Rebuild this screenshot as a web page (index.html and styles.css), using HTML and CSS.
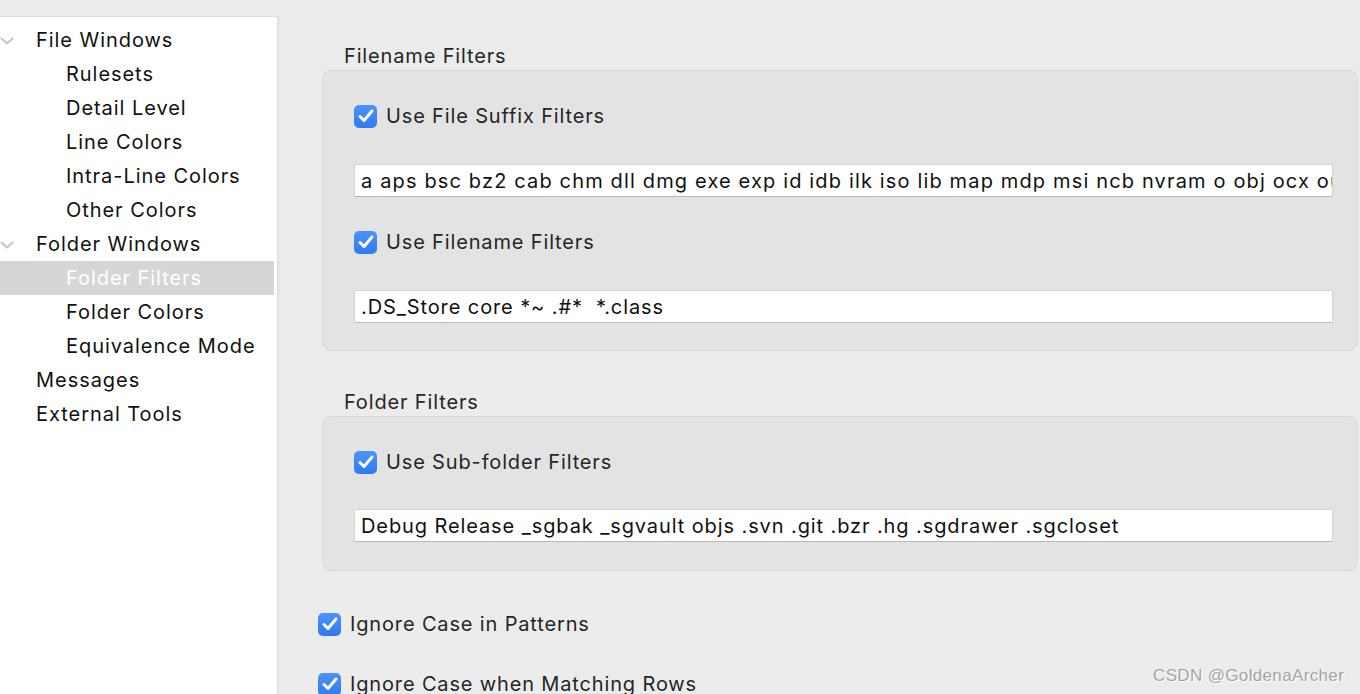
FILE: index.html
```html
<!DOCTYPE html>
<html>
<head>
<meta charset="utf-8">
<link rel="stylesheet" href="styles.css">
</head>
<body>
<div class="window">
  <aside class="sidebar">
    <ul class="tree">
      <li class="row top"><span class="chev"><svg width="14" height="10" viewBox="0 0 14 10"><path d="M1.5 2.5 L7 7.5 L12.5 2.5" fill="none" stroke="#c4c4c4" stroke-width="2" stroke-linecap="round" stroke-linejoin="round"/></svg></span>File Windows</li>
      <li class="row sub">Rulesets</li>
      <li class="row sub">Detail Level</li>
      <li class="row sub">Line Colors</li>
      <li class="row sub">Intra-Line Colors</li>
      <li class="row sub">Other Colors</li>
      <li class="row top"><span class="chev"><svg width="14" height="10" viewBox="0 0 14 10"><path d="M1.5 2.5 L7 7.5 L12.5 2.5" fill="none" stroke="#c4c4c4" stroke-width="2" stroke-linecap="round" stroke-linejoin="round"/></svg></span>Folder Windows</li>
      <li class="row sub selected">Folder Filters</li>
      <li class="row sub">Folder Colors</li>
      <li class="row sub">Equivalence Mode</li>
      <li class="row top">Messages</li>
      <li class="row top">External Tools</li>
    </ul>
  </aside>
  <main class="content">
    <section class="group">
      <h2 class="group-title">Filename Filters</h2>
      <div class="box">
        <label class="check"><span class="cb"><svg width="18" height="16" viewBox="0 0 18 16"><path d="M3 8.5 L7 12.5 L15 3" fill="none" stroke="#fff" stroke-width="3" stroke-linecap="round" stroke-linejoin="round"/></svg></span>Use File Suffix Filters</label>
        <div class="field wide">a aps bsc bz2 cab chm dll dmg exe exp id idb ilk iso lib map mdp msi ncb nvram o obj ocx out pch pdb pyc res sbr sdf so suo tlb vcxproj.user vsp</div>
        <label class="check"><span class="cb"><svg width="18" height="16" viewBox="0 0 18 16"><path d="M3 8.5 L7 12.5 L15 3" fill="none" stroke="#fff" stroke-width="3" stroke-linecap="round" stroke-linejoin="round"/></svg></span>Use Filename Filters</label>
        <div class="field">.DS_Store core *~ .#*&nbsp; *.class</div>
      </div>
    </section>
    <section class="group second">
      <h2 class="group-title">Folder Filters</h2>
      <div class="box">
        <label class="check"><span class="cb"><svg width="18" height="16" viewBox="0 0 18 16"><path d="M3 8.5 L7 12.5 L15 3" fill="none" stroke="#fff" stroke-width="3" stroke-linecap="round" stroke-linejoin="round"/></svg></span>Use Sub-folder Filters</label>
        <div class="field">Debug Release _sgbak _sgvault objs .svn .git .bzr .hg .sgdrawer .sgcloset</div>
      </div>
    </section>
    <div class="options">
      <label class="check plain"><span class="cb"><svg width="18" height="16" viewBox="0 0 18 16"><path d="M3 8.5 L7 12.5 L15 3" fill="none" stroke="#fff" stroke-width="3" stroke-linecap="round" stroke-linejoin="round"/></svg></span>Ignore Case in Patterns</label>
      <label class="check plain"><span class="cb"><svg width="18" height="16" viewBox="0 0 18 16"><path d="M3 8.5 L7 12.5 L15 3" fill="none" stroke="#fff" stroke-width="3" stroke-linecap="round" stroke-linejoin="round"/></svg></span>Ignore Case when Matching Rows</label>
    </div>
  </main>
</div>
<div class="watermark">CSDN @GoldenaArcher</div>
</body>
</html>
```
FILE: styles.css
```css
* { box-sizing: border-box; }
html, body {
  margin: 0;
  padding: 0;
  width: 1360px;
  height: 694px;
  overflow: hidden;
  background: #ececec;
  font-family: Inter, "Noto Sans", "Liberation Sans", sans-serif;
  color: #1d1d1d;
}
.window {
  display: flex;
  height: 694px;
  padding-top: 16px;
}
.sidebar {
  width: 278px;
  flex: none;
  background: #fff;
  border-top: 1px solid #dedede;
  border-right: 1px solid #dcdcdc;
  box-shadow: 2px 0 0 #e6e6e6;
  position: relative;
}
.tree {
  list-style: none;
  margin: 0;
  padding: 6px 0 0 0;
  width: 274px;
}
.row {
  height: 34px;
  line-height: 35px;
  font-size: 20px;
  color: #111;
  position: relative;
  white-space: nowrap;
  letter-spacing: 0.95px;
}
.row.top { padding-left: 36px; }
.row.sub { padding-left: 66px; }
.row.selected {
  background: #d6d6d6;
  color: #fff;
}
.chev {
  position: absolute;
  left: 0;
  top: 13px;
  width: 14px;
  height: 10px;
  line-height: 0;
}
.content {
  flex: 1;
  padding-left: 44px;
  padding-top: 25px;
  min-width: 0;
}
.group-title {
  margin: 0 0 0 22px;
  font-size: 20px;
  font-weight: 400;
  height: 30px;
  line-height: 31px;
  color: #262626;
  letter-spacing: 0.85px;
}
.box {
  margin-top: -1px;
  background: #e3e3e3;
  border: 1px solid #d9d9d9;
  border-radius: 9px;
  padding: 33px 0 27px 31px;
  width: 1036px;
}
.group.second { margin-top: 36px; }
.group.second .box { padding-bottom: 28px; }
.group.second .field { margin-top: 35px; }
.check {
  display: flex;
  align-items: center;
  height: 24px;
  font-size: 20px;
  color: #262626;
  letter-spacing: 0.85px;
}
.cb {
  width: 23px;
  height: 23px;
  border-radius: 5px;
  background: linear-gradient(#4c93fb, #2f7af4);
  display: inline-flex;
  align-items: center;
  justify-content: center;
  margin-right: 9px;
  flex: none;
}
.field {
  margin-top: 36px;
  margin-bottom: 33px;
  width: 979px;
  height: 33px;
  background: #fff;
  border: 1px solid #d4d4d4;
  border-bottom-color: #b9b9b9;
  padding: 0 6px;
  font-size: 20px;
  line-height: 32px;
  white-space: nowrap;
  overflow: hidden;
  color: #111;
  letter-spacing: 0.9px;
}
.field.wide { letter-spacing: 1.15px; }
.box .field:last-child { margin-bottom: 0; }
.options {
  margin-top: 41px;
  margin-left: -4px;
  display: flex;
  flex-direction: column;
  gap: 36px;
}
.watermark {
  position: absolute;
  left: 1153px;
  top: 666px;
  font-family: "Liberation Sans", Arial, sans-serif;
  font-size: 17px;
  letter-spacing: 0.35px;
  color: #a3a3a3;
  text-shadow: 1px 1px 0 #fff;
}
```
